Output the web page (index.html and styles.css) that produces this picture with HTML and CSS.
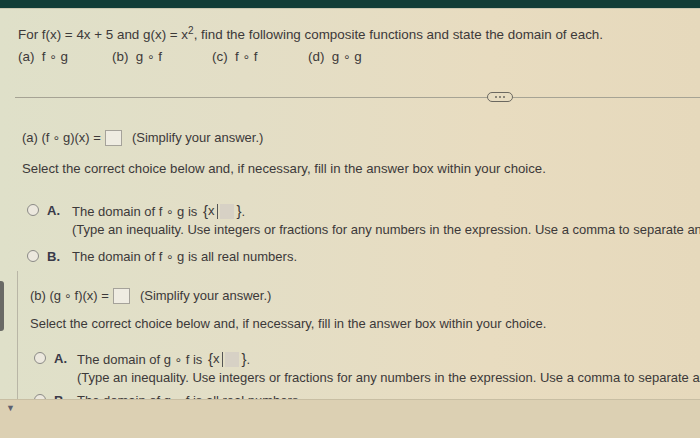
FILE: index.html
```html
<!DOCTYPE html>
<html>
<head>
<meta charset="utf-8">
<link rel="stylesheet" href="styles.css">
</head>
<body>
<div class="page">
  <div class="topbar"></div>
  <div class="main">
    <div class="header">
      <div class="line1">For f(x) = 4x + 5 and g(x) = x<sup>2</sup>, find the following composite functions and state the domain of each.</div>
      <div class="line2">
        <span>(a)&nbsp; f <span class="o">∘</span> g</span>
        <span>(b)&nbsp; g <span class="o">∘</span> f</span>
        <span>(c)&nbsp; f <span class="o">∘</span> f</span>
        <span>(d)&nbsp; g <span class="o">∘</span> g</span>
      </div>
    </div>
    <div class="divider">
      <div class="rule-left"></div>
      <div class="pill"><i></i><i></i><i></i></div>
      <div class="rule-right"></div>
    </div>
    <div class="part part-a">
      <div class="eq">(a) (f <span class="o">∘</span> g)(x) = <span class="box"></span> <span class="hint">(Simplify your answer.)</span></div>
      <div class="select">Select the correct choice below and, if necessary, fill in the answer box within your choice.</div>
      <div class="choice">
        <span class="radio"></span><b class="letter">A.</b>
        <div class="ctext">
          <div>The domain of f <span class="o">∘</span> g is <span class="set"><span class="br">{</span>x <span class="bar"></span><span class="gbox"></span><span class="br">}</span></span>.</div>
          <div>(Type an inequality. Use integers or fractions for any numbers in the expression. Use a comma to separate answers as needed.)</div>
        </div>
      </div>
      <div class="choice choice-b">
        <span class="radio"></span><b class="letter">B.</b>
        <div class="ctext"><div>The domain of f <span class="o">∘</span> g is all real numbers.</div></div>
      </div>
    </div>
    <div class="part part-b">
      <div class="eq">(b) (g <span class="o">∘</span> f)(x) = <span class="box"></span> <span class="hint">(Simplify your answer.)</span></div>
      <div class="select">Select the correct choice below and, if necessary, fill in the answer box within your choice.</div>
      <div class="choice">
        <span class="radio"></span><b class="letter">A.</b>
        <div class="ctext">
          <div>The domain of g <span class="o">∘</span> f is <span class="set"><span class="br">{</span>x <span class="bar"></span><span class="gbox"></span><span class="br">}</span></span>.</div>
          <div>(Type an inequality. Use integers or fractions for any numbers in the expression. Use a comma to separate answers as needed.)</div>
        </div>
      </div>
      <div class="choice choice-b">
        <span class="radio"></span><b class="letter">B.</b>
        <div class="ctext"><div>The domain of g <span class="o">∘</span> f is all real numbers.</div></div>
      </div>
    </div>
    <div class="sideline"></div>
    <div class="thumb"></div>
  </div>
  <div class="bottom"><span class="arrow">▼</span></div>
</div>
</body>
</html>
```
FILE: styles.css
```css
html, body { margin: 0; padding: 0; }
body {
  font-family: "Liberation Sans", Arial, sans-serif;
  color: #3c3939;
  font-size: 13px;
}
.page {
  width: 700px;
  height: 438px;
  overflow: hidden;
  display: flex;
  flex-direction: column;
  background: linear-gradient(90deg, #dfe0c9 0%, #e3dec6 35%, #e8dcc0 70%, #e6d9bc 100%);
}
.topbar {
  height: 8px;
  flex: none;
  background: #113d37;
  border-bottom: 1px solid #c9c7b0;
}
.main {
  position: relative;
  height: 390px;
  flex: none;
  overflow: hidden;
}
.header { padding: 18px 0 0 18px; font-size: 13.4px; }
.line1, .line2 { line-height: 16px; white-space: nowrap; }
.line1 sup { font-size: 10px; line-height: 0; }
.line2 {
  margin-top: 6px;
  display: grid;
  grid-template-columns: 94px 100px 96px auto;
}
.o { font-family: "DejaVu Sans", sans-serif; font-size: 12px; }
.divider {
  margin-top: 27px;
  display: flex;
  align-items: center;
  height: 10px;
}
.rule-left { margin-left: 15px; width: 472px; height: 1px; background: #a6a394; }
.rule-right { flex: 1; height: 1px; background: #a6a394; }
.pill {
  width: 24px;
  height: 8px;
  border: 1px solid #6b6860;
  border-radius: 5px;
  display: flex;
  justify-content: center;
  align-items: center;
  gap: 2px;
  background: #e7dcc1;
}
.pill i { width: 2px; height: 2px; border-radius: 50%; background: #6b6860; }
.part { white-space: nowrap; }
.part-a { padding: 28px 0 0 22px; }
.part-b { padding: 22px 0 0 30px; }
.eq { line-height: 16px; display: flex; align-items: center; }
.eq .o { margin: 0 3px; }
.box {
  display: inline-block;
  width: 15px;
  height: 14px;
  border: 1px solid #a5a29a;
  background: #efece2;
  margin-left: 4px;
}
.hint { margin-left: 10px; }
.select { line-height: 16px; margin-top: 15px; }
.part-a .select { font-size: 13.2px; }
.part-b .select { margin-top: 12px; }
.choice {
  display: flex;
  align-items: flex-start;
  margin-top: 25px;
  line-height: 17px;
}
.part-a .choice { padding-left: 5px; }
.part-b .choice { padding-left: 4px; margin-top: 18px; }
.part-a .choice-b { margin-top: 9px; }
.part-b .choice-b { margin-top: 5px; }
.radio {
  width: 10px;
  height: 10px;
  border: 1.5px solid #8b8a86;
  border-radius: 50%;
  background: #ece8de;
  margin-top: 2px;
  flex: none;
}
.letter { margin-left: 8px; width: 25px; flex: none; color: #3a3a48; }
.part-b .letter { width: 23px; }
.ctext { line-height: 18px; }
.set { display: inline-flex; align-items: center; margin-left: 2px; }
.br { font-size: 15px; line-height: 16px; }
.bar { display: inline-block; width: 1px; height: 15px; background: #555; margin: 0 2px 0 3px; }
.gbox { display: inline-block; width: 14px; height: 15px; background: #d7d1c5; margin-right: 2px; }
.sideline {
  position: absolute;
  left: 17px;
  top: 262px;
  width: 1px;
  height: 130px;
  background: #b9b6a6;
}
.thumb {
  position: absolute;
  left: 0;
  top: 272px;
  width: 4px;
  height: 50px;
  border-radius: 0 3px 3px 0;
  background: #6a6a66;
}
.bottom {
  flex: 1;
  background: #dcd0b3;
  border-top: 1px solid #c8bea3;
  position: relative;
}
.arrow {
  position: absolute;
  left: 6px;
  top: 3px;
  font-size: 9px;
  color: #5d6070;
}
```
